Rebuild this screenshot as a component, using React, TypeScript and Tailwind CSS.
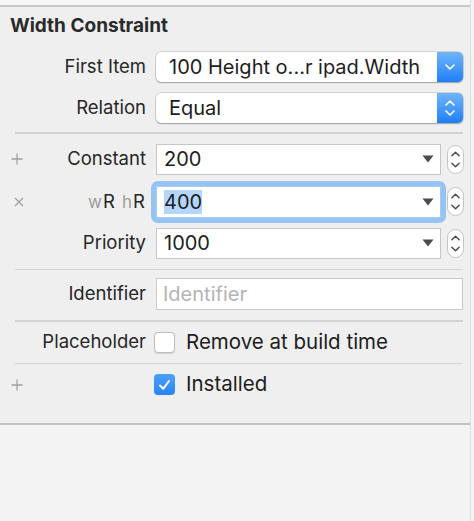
import type { ReactNode } from 'react'

const font = { fontFamily: 'Inter, "Liberation Sans", sans-serif' }

function Chevron({ dir, className }: { dir: 'up' | 'down'; className?: string }) {
  return (
    <svg width="10" height="6" viewBox="0 0 10 6" className={className}>
      <path
        d={dir === 'down' ? 'M1 1 L5 5 L9 1' : 'M1 5 L5 1 L9 5'}
        fill="none"
        stroke="currentColor"
        strokeWidth="1.6"
        strokeLinecap="round"
        strokeLinejoin="round"
      />
    </svg>
  )
}

function Popup({ value, double }: { value: string; double?: boolean }) {
  return (
    <div className="flex h-[30px] w-[307px] overflow-hidden rounded-[5px] bg-white shadow-[0_0_0_0.5px_rgba(0,0,0,0.22),0_1px_1.5px_rgba(0,0,0,0.25)]">
      <div className="flex flex-1 items-center pl-[13px] text-[20px] text-[#1d1d1d]">{value}</div>
      <div className="flex w-[26px] flex-col items-center justify-center gap-[4px] bg-gradient-to-b from-[#6fb4fb] to-[#1b7ff9] text-white">
        {double ? (
          <>
            <Chevron dir="up" />
            <Chevron dir="down" />
          </>
        ) : (
          <Chevron dir="down" />
        )}
      </div>
    </div>
  )
}

function Stepper() {
  return (
    <div className="ml-[6px] flex h-[29px] w-[17px] flex-col items-center justify-center gap-[5px] rounded-full border border-[#c4c4c4] bg-white text-[#4a4a4a]">
      <Chevron dir="up" className="w-[9px]" />
      <Chevron dir="down" className="w-[9px]" />
    </div>
  )
}

function Combo({ value, focused }: { value: string; focused?: boolean }) {
  return (
    <div className="flex items-center">
      <div
        className={
          focused
            ? 'flex h-[32px] w-[285px] items-center rounded-[2px] border border-[#a9c8ec] bg-white outline outline-[5px] outline-[#95c3f4]'
            : 'flex h-[31px] w-[285px] items-center border border-[#c6c6c6] bg-white'
        }
      >
        <div className="flex-1 pl-[7px] text-[20px] text-[#1d1d1d]">
          {focused ? <span className="bg-[#b4d5fe]">{value}</span> : value}
        </div>
        <svg width="12" height="8" viewBox="0 0 12 8" className="mr-[6px]">
          <path d="M0.5 0.5 H11.5 L6 7.5 Z" fill="#4b4b4b" />
        </svg>
      </div>
      <Stepper />
    </div>
  )
}

function Row({ icon, label, children, className }: { icon?: ReactNode; label?: ReactNode; children: ReactNode; className?: string }) {
  return (
    <div className={`flex items-center ${className ?? ''}`}>
      <div className="flex w-[146px] items-center justify-between pl-[11px]">
        <div className="w-[14px] text-[#9a9a9a]">{icon}</div>
        <div className="text-[18.5px] text-[#262626]">{label}</div>
      </div>
      <div className="ml-[10px] flex items-center">{children}</div>
    </div>
  )
}

function Sep({ className }: { className: string }) {
  return <div className={`ml-[15px] h-[1.5px] w-[448px] bg-[#d3d3d3] ${className}`} />
}

function Plus() {
  return (
    <svg width="12" height="12" viewBox="0 0 12 12">
      <path d="M6 0.5 V11.5 M0.5 6 H11.5" stroke="#a0a0a0" strokeWidth="1.3" />
    </svg>
  )
}

function Cross() {
  return (
    <svg width="10" height="10" viewBox="0 0 10 10" className="ml-[3px]">
      <path d="M1 1 L9 9 M9 1 L1 9" stroke="#a0a0a0" strokeWidth="1.3" />
    </svg>
  )
}

function Checkbox({ checked }: { checked?: boolean }) {
  if (checked) {
    return (
      <div className="flex h-[21px] w-[21px] items-center justify-center rounded-[4px] bg-gradient-to-b from-[#4aa1fb] to-[#2a82f6]">
        <svg width="13" height="12" viewBox="0 0 13 12">
          <path d="M2 6.5 L5.2 9.8 L11 2" fill="none" stroke="white" strokeWidth="2" strokeLinecap="round" strokeLinejoin="round" />
        </svg>
      </div>
    )
  }
  return <div className="h-[21px] w-[21px] rounded-[4px] border border-[#bdbdbd] bg-white shadow-[0_0.5px_1px_rgba(0,0,0,0.12)]" />
}

export default function App() {
  return (
    <div className="flex h-[521px] w-[474px] select-none bg-[#f4f4f4]" style={font}>
      <div className="flex w-[471px] flex-col border-r border-[#dedede]">
        <div className="h-[5px] bg-[#f7f7f7]" />
        <div className="h-[2px] bg-[#c8c8c8]" />
        <div className="flex h-[416px] flex-col bg-[#efefef]">
          <div className="ml-[10px] mt-[7px] h-[24px] text-[19px] font-bold leading-[24px] text-[#2a2a2a]">Width Constraint</div>

          <Row label="First Item" className="mt-[14px] h-[30px]">
            <Popup value="100 Height o...r ipad.Width" />
          </Row>
          <Row label="Relation" className="mt-[11px] h-[30px]">
            <Popup value="Equal" double />
          </Row>

          <Sep className="mt-[9px]" />

          <Row icon={<Plus />} label="Constant" className="mt-[10px] h-[31px]">
            <Combo value="200" />
          </Row>
          <Row
            icon={<Cross />}
            label={
              <span className="tracking-[1px]">
                <span className="text-[17px] text-[#9b9b9b]">w</span>R <span className="text-[17px] text-[#9b9b9b]">h</span>R
              </span>
            }
            className="mt-[11px] h-[32px]"
          >
            <Combo value="400" focused />
          </Row>
          <Row label="Priority" className="mt-[10px] h-[31px]">
            <Combo value="1000" />
          </Row>

          <Sep className="mt-[10px]" />

          <Row label="Identifier" className="mt-[8px] h-[32px]">
            <div className="flex h-[32px] w-[307px] items-center border border-[#c8c8c8] bg-white pl-[6px] text-[20px] text-[#b4b4b4]">
              Identifier
            </div>
          </Row>

          <Sep className="mt-[10px]" />

          <Row label="Placeholder" className="mt-[10px] h-[21px]">
            <div className="-ml-[2px] flex items-center gap-[11px]">
              <Checkbox />
              <span className="text-[20.5px] text-[#1d1d1d]">Remove at build time</span>
            </div>
          </Row>

          <Sep className="mt-[10px]" />

          <Row icon={<Plus />} className="mt-[10px] h-[21px]">
            <div className="-ml-[2px] flex items-center gap-[11px]">
              <Checkbox checked />
              <span className="text-[20.5px] text-[#1d1d1d]">Installed</span>
            </div>
          </Row>
        </div>
        <div className="h-[2px] bg-[#c2c2c2]" />
        <div className="flex-1 bg-[#f3f3f3]" />
      </div>
    </div>
  )
}
